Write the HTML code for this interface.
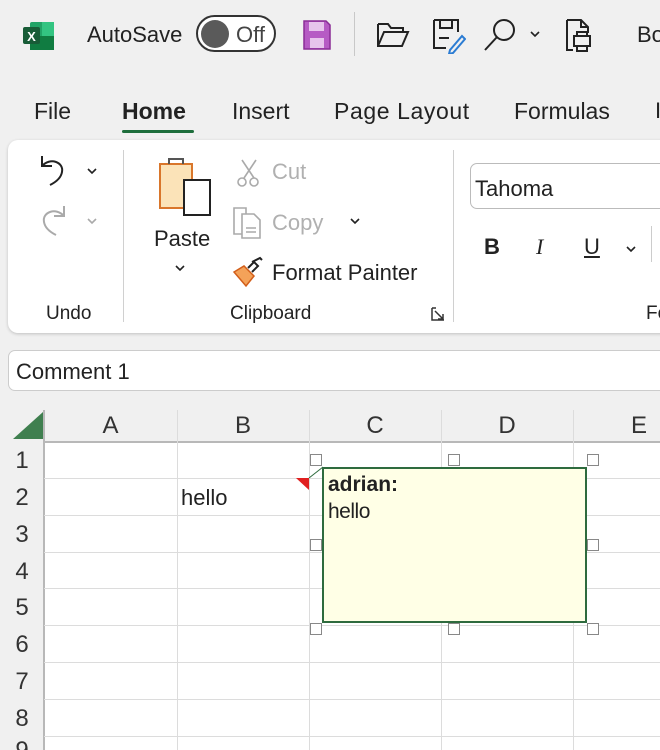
<!DOCTYPE html>
<html style="width:660px;height:750px;overflow:hidden"><head><meta charset="utf-8"><style>
*{margin:0;padding:0;box-sizing:border-box}
body{width:660px;height:750px;overflow:hidden;background:#f0f0f0;font-family:"Liberation Sans",sans-serif;color:#222;position:relative}
.a{position:absolute;white-space:nowrap}
.t{font-size:22px;color:#222}
.hl{position:absolute;left:44px;width:616px;height:1px;background:#dcdcdc}
.vl{position:absolute;top:410px;height:340px;width:1px;background:#dcdcdc}
.h{position:absolute;width:12px;height:12px;border:1px solid #888;background:#fff}
.rn{position:absolute;left:0;width:44px;text-align:center;font-size:24px;color:#333}
.cn{position:absolute;top:412px;font-size:24px;color:#333;text-align:center}
.g{color:#b0b0b0}
.cv{position:absolute;width:12px;height:8px}
</style></head><body>
<svg class="a" style="left:22px;top:20px" width="34" height="32" viewBox="0 0 34 32">
<rect x="8" y="2" width="24" height="28" rx="2" fill="#21a366"/><rect x="8" y="16" width="24" height="14" fill="#107c41"/><rect x="20" y="2" width="12" height="14" fill="#33c481"/>
<rect x="1" y="7" width="17" height="17" rx="2" fill="#185c37"/><text x="9.5" y="21" font-size="13" fill="#fff" font-family="Liberation Sans" font-weight="bold" text-anchor="middle">X</text></svg>
<div class="a t" style="left:87px;top:22px">AutoSave</div>
<div class="a" style="left:196px;top:15px;width:80px;height:37px;border:2px solid #333;border-radius:19px;background:#fff"></div>
<div class="a" style="left:201px;top:20px;width:28px;height:28px;border-radius:50%;background:#5a5a5a"></div>
<div class="a t" style="left:236px;top:22px;color:#444">Off</div>
<svg class="a" style="left:302px;top:19px" width="30" height="32"><path d="M2 2h22l4 4v24H2z" fill="#b65bc4" stroke="#8a2c96" stroke-width="1.5"/><rect x="7" y="3" width="15" height="9" fill="#e7c4ec"/><rect x="8" y="19" width="14" height="10" fill="#e7c4ec"/></svg>
<div class="a" style="left:354px;top:12px;width:1px;height:44px;background:#c8c8c8"></div>
<svg class="a" style="left:376px;top:20px" width="34" height="30" fill="none" stroke="#222" stroke-width="2"><path d="M2 4h10l3 4h12v4M2 4v22h24l6-14H8L2 26"/></svg>
<svg class="a" style="left:432px;top:18px" width="34" height="36" fill="none" stroke="#222" stroke-width="2"><path d="M2 2h24v12M2 2v28h12M8 2v8h12V2M7 20h10"/><path d="M18 32l12-14 3 3-12 14-4 1z" stroke="#2b7cd3"/></svg>
<svg class="a" style="left:482px;top:18px" width="36" height="40" fill="none" stroke="#222" stroke-width="2"><circle cx="22" cy="12" r="10"/><path d="M15 19L3 32"/></svg>
<svg class="cv" style="left:529px;top:30px" viewBox="0 0 12 8"><path d="M2 2l4 4 4-4" fill="none" stroke="#222" stroke-width="1.6"/></svg>
<svg class="a" style="left:564px;top:18px" width="30" height="36" fill="none" stroke="#222" stroke-width="2"><path d="M3 2h14l7 7v6M17 2v7h7M3 2v30h6M10 18h16v10H10zM13 18v-4h10v4M13 28v5h10v-5"/></svg>
<div class="a t" style="left:637px;top:22px">Bo</div>
<div class="a t" style="left:34px;top:98px;font-size:23px">File</div>
<div class="a t" style="left:122px;top:98px;font-weight:bold;font-size:23px">Home</div>
<div class="a" style="left:122px;top:130px;width:72px;height:3px;border-radius:2px;background:#1e6e3c"></div>
<div class="a t" style="left:232px;top:98px;font-size:23px">Insert</div>
<div class="a t" style="left:334px;top:98px;font-size:23px;letter-spacing:0.6px">Page Layout</div>
<div class="a t" style="left:514px;top:98px;font-size:23px">Formulas</div>
<div class="a t" style="left:655px;top:98px">I</div>
<div class="a" style="left:8px;top:140px;width:670px;height:193px;background:#fff;border-radius:10px;box-shadow:0 1px 3px rgba(0,0,0,.2)"></div>
<svg class="a" style="left:38px;top:154px" width="30" height="34" fill="none" stroke="#222" stroke-width="2"><path d="M4 2v10h10M4 12C12 3 26 8 24 18c-1 6-6 10-12 13"/></svg>
<svg class="cv" style="left:86px;top:167px" viewBox="0 0 12 8"><path d="M2 2l4 4 4-4" fill="none" stroke="#222" stroke-width="1.6"/></svg>
<svg class="a" style="left:38px;top:204px" width="30" height="34" fill="none" stroke="#aaa" stroke-width="2"><path d="M26 2v10H16M26 12C18 3 4 8 6 18c1 6 6 10 12 13"/></svg>
<svg class="cv" style="left:86px;top:217px" viewBox="0 0 12 8"><path d="M2 2l4 4 4-4" fill="none" stroke="#aaa" stroke-width="1.6"/></svg>
<div class="a" style="left:46px;top:303px;font-size:19px">Undo</div>
<div class="a" style="left:123px;top:150px;width:1px;height:172px;background:#d0d0d0"></div>
<svg class="a" style="left:158px;top:156px" width="56" height="62"><rect x="2" y="8" width="32" height="44" fill="#fbe3b8" stroke="#d9762b" stroke-width="2"/><path d="M11 8V3h14v5" fill="none" stroke="#555" stroke-width="2"/><rect x="26" y="24" width="26" height="35" fill="#fff" stroke="#222" stroke-width="2"/></svg>
<div class="a" style="left:154px;top:226px;font-size:22px">Paste</div>
<svg class="cv" style="left:174px;top:264px" viewBox="0 0 12 8"><path d="M2 2l4 4 4-4" fill="none" stroke="#222" stroke-width="1.6"/></svg>
<svg class="a" style="left:236px;top:158px" width="26" height="30" fill="none" stroke="#aaa" stroke-width="1.6"><path d="M6 2l12 18M20 2L8 20"/><circle cx="6" cy="24" r="4"/><circle cx="18" cy="24" r="4"/></svg>
<div class="a t g" style="left:272px;top:159px">Cut</div>
<svg class="a" style="left:232px;top:206px" width="34" height="34" fill="none" stroke="#aaa" stroke-width="1.6"><path d="M2 2h12v26H2z"/><path d="M10 8h12l6 6v18H10z" fill="#fff"/><path d="M14 22h10M14 26h10"/></svg>
<div class="a t g" style="left:272px;top:210px">Copy</div>
<svg class="cv" style="left:349px;top:217px" viewBox="0 0 12 8"><path d="M2 2l4 4 4-4" fill="none" stroke="#222" stroke-width="1.6"/></svg>
<svg class="a" style="left:232px;top:256px" width="34" height="32"><path d="M2 16l12 14 8-10-10-10z" fill="#f4a259" stroke="#d25e1a" stroke-width="1.5"/><path d="M16 12l6-6 4 4-6 6M20 6l8-4 2 2" fill="none" stroke="#222" stroke-width="2"/></svg>
<div class="a t" style="left:272px;top:260px">Format Painter</div>
<div class="a" style="left:230px;top:303px;font-size:19px">Clipboard</div>
<svg class="a" style="left:430px;top:306px" width="16" height="16" fill="none" stroke="#333" stroke-width="1.5"><path d="M2 2v12h12M2 2h4M5 5l8 8M8 13h5V8"/></svg>
<div class="a" style="left:453px;top:150px;width:1px;height:172px;background:#d0d0d0"></div>
<div class="a" style="left:470px;top:163px;width:200px;height:46px;border:1px solid #bbb;border-radius:7px;background:#fff"></div>
<div class="a t" style="left:475px;top:176px">Tahoma</div>
<div class="a" style="left:484px;top:234px;font-size:22px;font-weight:bold">B</div>
<div class="a" style="left:536px;top:234px;font-size:22px;font-style:italic;font-family:'Liberation Serif',serif">I</div>
<div class="a" style="left:584px;top:234px;font-size:22px;text-decoration:underline">U</div>
<svg class="cv" style="left:625px;top:245px" viewBox="0 0 12 8"><path d="M2 2l4 4 4-4" fill="none" stroke="#222" stroke-width="1.6"/></svg>
<div class="a" style="left:651px;top:226px;width:1px;height:36px;background:#ccc"></div>
<div class="a" style="left:646px;top:303px;font-size:19px">Fo</div>
<div class="a" style="left:8px;top:350px;width:670px;height:41px;border:1px solid #ccc;border-radius:7px;background:#fff"></div>
<div class="a t" style="left:16px;top:359px">Comment 1</div>
<div class="a" style="left:0;top:410px;width:660px;height:340px;background:#fff;overflow:hidden">
</div>
<div class="a" style="left:0;top:410px;width:660px;height:32px;background:#f0f0f0"></div>
<div class="a" style="left:0;top:410px;width:44px;height:340px;background:#f0f0f0"></div>
<div class="a" style="left:44px;top:441px;width:616px;height:2px;background:#b8b8b8"></div>
<div class="a" style="left:43px;top:410px;width:2px;height:340px;background:#b8b8b8"></div>
<svg class="a" style="left:10px;top:410px" width="34" height="30"><path d="M33 29V2L3 29z" fill="#3f7f4f"/></svg>
<div class="vl" style="left:177px"></div><div class="vl" style="left:309px"></div><div class="vl" style="left:441px"></div><div class="vl" style="left:573px"></div>
<div class="hl" style="top:478px"></div><div class="hl" style="top:515px"></div><div class="hl" style="top:552px"></div><div class="hl" style="top:588px"></div><div class="hl" style="top:625px"></div><div class="hl" style="top:662px"></div><div class="hl" style="top:699px"></div><div class="hl" style="top:736px"></div>
<div class="cn" style="left:44px;width:133px">A</div><div class="cn" style="left:177px;width:132px">B</div><div class="cn" style="left:309px;width:132px">C</div><div class="cn" style="left:441px;width:132px">D</div><div class="cn" style="left:573px;width:132px">E</div>
<div class="rn" style="top:447px">1</div><div class="rn" style="top:484px">2</div><div class="rn" style="top:521px">3</div><div class="rn" style="top:558px">4</div><div class="rn" style="top:594px">5</div><div class="rn" style="top:631px">6</div><div class="rn" style="top:668px">7</div><div class="rn" style="top:705px">8</div>
<div class="rn" style="top:738px;height:12px;overflow:hidden;line-height:26px">9</div>
<div class="a t" style="left:181px;top:485px">hello</div>
<svg class="a" style="left:296px;top:466px" width="30" height="26"><path d="M0 12h13v12z" fill="#e02020"/><path d="M13 12L27 1" stroke="#2e6b3e" stroke-width="1"/></svg>
<div class="a" style="left:322px;top:467px;width:265px;height:156px;background:#ffffe6;border:2px solid #2e6b3e"></div>
<div class="a" style="left:328px;top:473px;font-size:21px;font-weight:bold;font-family:'Liberation Sans',sans-serif">adrian:</div>
<div class="a" style="left:328px;top:500px;font-size:21px;font-family:'Liberation Sans',sans-serif;letter-spacing:-0.5px">hello</div>
<div class="h" style="left:310px;top:454px"></div><div class="h" style="left:448px;top:454px"></div><div class="h" style="left:587px;top:454px"></div>
<div class="h" style="left:310px;top:539px"></div><div class="h" style="left:587px;top:539px"></div>
<div class="h" style="left:310px;top:623px"></div><div class="h" style="left:448px;top:623px"></div><div class="h" style="left:587px;top:623px"></div>
</body></html>
